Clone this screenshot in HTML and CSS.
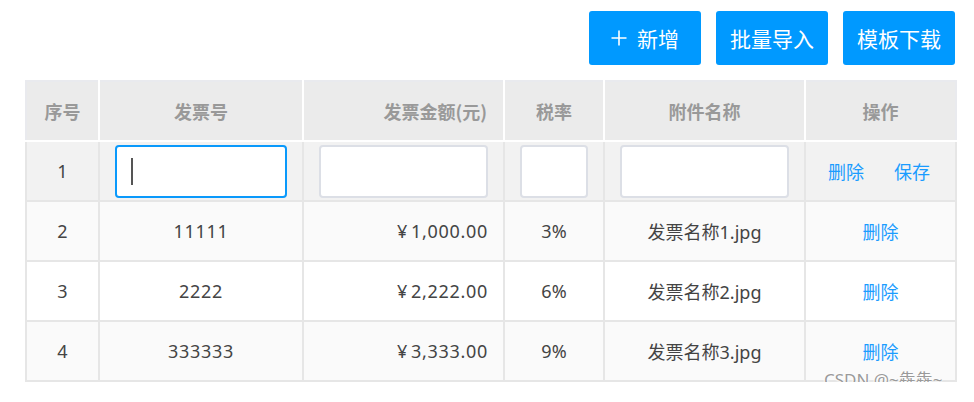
FILE: index.html
```html
<!DOCTYPE html>
<html lang="zh-CN">
<head>
<meta charset="utf-8">
<title>发票列表</title>
<link rel="stylesheet" href="styles.css">
</head>
<body>
<div class="page">
  <div class="toolbar">
    <button class="btn" type="button">
      <svg class="btn-icon" viewBox="0 0 16 16" width="16" height="16" aria-hidden="true"><path d="M8 0.5V15.5M0.5 8H15.5" stroke="#fff" stroke-width="1.6" fill="none"/></svg>
      <span>新增</span>
    </button>
    <button class="btn" type="button">批量导入</button>
    <button class="btn" type="button">模板下载</button>
  </div>
  <table class="grid">
    <colgroup>
      <col class="c-idx"><col class="c-no"><col class="c-amt"><col class="c-rate"><col class="c-file"><col class="c-op">
    </colgroup>
    <thead>
      <tr>
        <th>序号</th>
        <th>发票号</th>
        <th class="right">发票金额(元)</th>
        <th>税率</th>
        <th>附件名称</th>
        <th>操作</th>
      </tr>
    </thead>
    <tbody>
      <tr class="row-edit">
        <td>1</td>
        <td><label class="field is-focused"><input type="text" aria-label="发票号"><span class="caret"></span></label></td>
        <td><label class="field"><input type="text" aria-label="发票金额"></label></td>
        <td><label class="field"><input type="text" aria-label="税率"></label></td>
        <td><label class="field"><input type="text" aria-label="附件名称"></label></td>
        <td><div class="ops"><a class="link">删除</a><a class="link">保存</a></div></td>
      </tr>
      <tr class="row-alt">
        <td>2</td><td class="num">11111</td><td class="right num"><span class="cur">¥</span>1,000.00</td><td>3%</td><td>发票名称1.jpg</td><td><a class="link">删除</a></td>
      </tr>
      <tr>
        <td>3</td><td class="num">2222</td><td class="right num"><span class="cur">¥</span>2,222.00</td><td>6%</td><td>发票名称2.jpg</td><td><a class="link">删除</a></td>
      </tr>
      <tr class="row-alt">
        <td>4</td><td class="num">333333</td><td class="right num"><span class="cur">¥</span>3,333.00</td><td>9%</td><td>发票名称3.jpg</td><td><a class="link">删除</a></td>
      </tr>
    </tbody>
  </table>
  <div class="watermark">CSDN @~犇犇~</div>
</div>
</body>
</html>
```

FILE: styles.css
```css
html, body {
  margin: 0;
  padding: 0;
  background: #fff;
}
body {
  font-family: "Noto Sans", "Noto Sans CJK SC", sans-serif;
  color: #444;
}
.page {
  position: relative;
  width: 930px;
  padding: 11px 0 0 25px;
}
.toolbar {
  display: flex;
  justify-content: flex-end;
  gap: 15px;
  margin-bottom: 15px;
}
.btn {
  height: 54px;
  min-width: 112px;
  padding: 0 12px;
  border: none;
  border-radius: 3px;
  background: #0099ff;
  color: #fff;
  font-family: "Noto Sans CJK SC", sans-serif;
  font-size: 21px;
  display: flex;
  align-items: center;
  justify-content: center;
  gap: 10px;
}
.btn-icon { display: block; }
.grid {
  width: 930px;
  table-layout: fixed;
  border-collapse: collapse;
  border: 2px solid #e9eaee;
  font-size: 18px;
}
.c-idx { width: 73px; }
.c-no { width: 204px; }
.c-amt { width: 201px; }
.c-rate { width: 100px; }
.c-file { width: 201px; }
.c-op { width: 151px; }
.grid th {
  height: 58px;
  background: #ebebeb;
  color: #999;
  font-weight: bold;
  font-size: 18px;
  font-family: "Noto Sans CJK SC", sans-serif;
  border-left: 2px solid #fff;
  border-bottom: 2px solid #fff;
  padding: 0 15px;
  text-align: center;
}
.grid th.right { padding-right: 16px; }
.grid th:first-child { border-left: 2px solid #e9eaee; }
.grid td {
  height: 58px;
  padding: 0 15px;
  border: 2px solid #e6e6e6;
  text-align: center;
  color: #444;
}
.grid .right { text-align: right; }
.grid .num { letter-spacing: 0.7px; }
.cur { margin-right: 3px; }
.row-edit td { background: #f2f2f2; }
.row-alt td { background: #fafafa; }
.field {
  position: relative;
  display: block;
}
.field input {
  display: block;
  width: 100%;
  box-sizing: border-box;
  height: 53px;
  border: 2px solid #dcdfe6;
  border-radius: 4px;
  background: #fff;
  outline: none;
  padding: 0 14px;
  font: inherit;
}
.field.is-focused input { border-color: #0a99fb; }
.caret {
  position: absolute;
  left: 16px;
  top: 13px;
  width: 2px;
  height: 27px;
  background: #555;
}
.ops {
  display: flex;
  justify-content: center;
  gap: 30px;
  padding-right: 3px;
}
.link {
  color: #1a9cff;
  font-family: "Noto Sans CJK SC", sans-serif;
  font-size: 18px;
  cursor: pointer;
}
.watermark {
  position: absolute;
  z-index: 2;
  left: 824px;
  top: 368px;
  font-size: 17px;
  line-height: 24px;
  color: #9a9a9a;
  text-shadow: 0 0 2px #fff, 0 0 2px #fff, 0 0 3px #fff;
  font-family: "Noto Sans", "Noto Sans CJK SC", sans-serif;
  white-space: nowrap;
}
```
